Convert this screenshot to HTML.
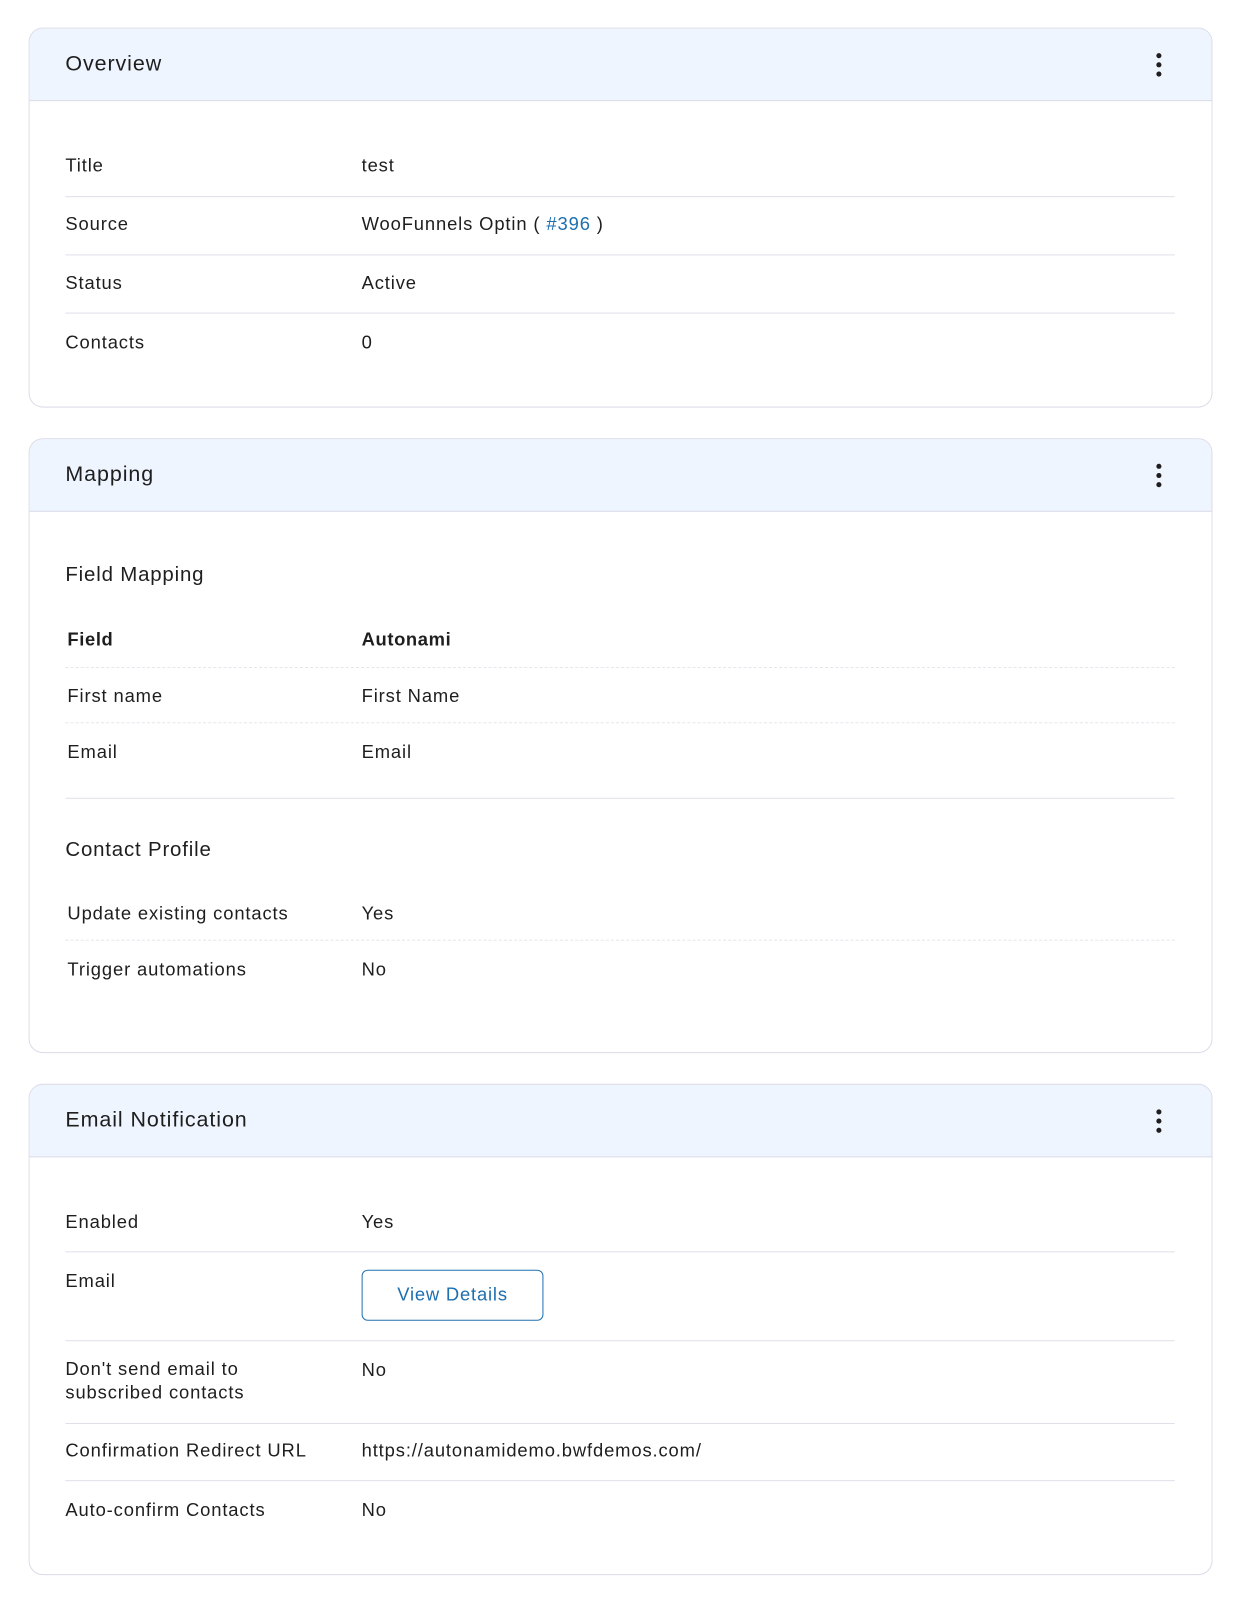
<!DOCTYPE html>
<html><head><meta charset="utf-8"><style>
html,body{margin:0;padding:0;background:#fff;}
body{width:1238px;height:1600px;overflow:hidden;position:relative;font-family:"Liberation Sans",Arial,sans-serif;color:#1e1e1e;}
#w{position:absolute;left:0;top:0;width:1212px;height:1567px;transform:scale(1.0215);transform-origin:0 0;}
.card{position:absolute;left:28px;width:1159px;border:1px solid #dcdce8;border-radius:14px;background:#fff;overflow:hidden;box-sizing:border-box;}
.hd{position:absolute;left:0;top:0;right:0;height:70px;background:#eef5ff;border-bottom:1px solid #dcdce8;}
.hd span{position:absolute;left:35px;top:22px;font-size:21px;line-height:26px;letter-spacing:0.9px;}
.dots{position:absolute;left:1103px;top:24px;width:5px;}
.dots i{display:block;width:5px;height:5px;border-radius:50%;background:#1e1e1e;margin-bottom:4px;}
.t{position:absolute;font-size:18px;line-height:24px;white-space:nowrap;letter-spacing:0.85px;}
.b{font-weight:bold;letter-spacing:0.6px;}
.ln{position:absolute;left:64px;width:1086px;height:0;border-top:1px solid #e0e0ea;}
.dl{position:absolute;left:64px;width:1086px;height:0;border-top:1px dashed #e6e6ee;}
a{color:#1c6fb0;text-decoration:none;}
.btn{position:absolute;left:354px;top:1243px;width:178px;height:50px;box-sizing:border-box;border:1.5px solid #2271b1;border-radius:6px;color:#1c6fb0;font-size:18px;line-height:47px;text-align:center;letter-spacing:0.8px;}
.h2{position:absolute;font-size:20px;line-height:24px;letter-spacing:0.8px;}
</style></head><body><div id="w">

<div class="card" style="top:27px;height:372px;"><div class="hd"><span>Overview</span><div class="dots"><i></i><i></i><i></i></div></div></div>
<div class="t" style="left:64px;top:150px;">Title</div><div class="t" style="left:354px;top:150px;">test</div>
<div class="ln" style="top:192px;"></div>
<div class="t" style="left:64px;top:207px;">Source</div><div class="t" style="left:354px;top:207px;">WooFunnels Optin ( <a>#396</a> )</div>
<div class="ln" style="top:249px;"></div>
<div class="t" style="left:64px;top:265px;">Status</div><div class="t" style="left:354px;top:265px;">Active</div>
<div class="ln" style="top:306px;"></div>
<div class="t" style="left:64px;top:323px;">Contacts</div><div class="t" style="left:354px;top:323px;">0</div>

<div class="card" style="top:429px;height:602px;"><div class="hd"><span>Mapping</span><div class="dots"><i></i><i></i><i></i></div></div></div>
<div class="h2" style="left:64px;top:551px;">Field Mapping</div>
<div class="t b" style="left:66px;top:614px;">Field</div><div class="t b" style="left:354px;top:614px;">Autonami</div>
<div class="dl" style="top:653px;"></div>
<div class="t" style="left:66px;top:669px;">First name</div><div class="t" style="left:354px;top:669px;">First Name</div>
<div class="dl" style="top:707px;"></div>
<div class="t" style="left:66px;top:724px;">Email</div><div class="t" style="left:354px;top:724px;">Email</div>
<div class="ln" style="top:781px;"></div>
<div class="h2" style="left:64px;top:820px;">Contact Profile</div>
<div class="t" style="left:66px;top:882px;">Update existing contacts</div><div class="t" style="left:354px;top:882px;">Yes</div>
<div class="dl" style="top:920px;"></div>
<div class="t" style="left:66px;top:937px;">Trigger automations</div><div class="t" style="left:354px;top:937px;">No</div>

<div class="card" style="top:1061px;height:481px;"><div class="hd"><span>Email Notification</span><div class="dots"><i></i><i></i><i></i></div></div></div>
<div class="t" style="left:64px;top:1184px;">Enabled</div><div class="t" style="left:354px;top:1184px;">Yes</div>
<div class="ln" style="top:1225px;"></div>
<div class="t" style="left:64px;top:1242px;">Email</div>
<div class="btn">View Details</div>
<div class="ln" style="top:1312px;"></div>
<div class="t" style="left:64px;top:1329px;line-height:23px;">Don't send email to<br>subscribed contacts</div><div class="t" style="left:354px;top:1329px;">No</div>
<div class="ln" style="top:1393px;"></div>
<div class="t" style="left:64px;top:1408px;">Confirmation Redirect URL</div><div class="t" style="left:354px;top:1408px;">https://autonamidemo.bwfdemos.com/</div>
<div class="ln" style="top:1449px;"></div>
<div class="t" style="left:64px;top:1466px;">Auto-confirm Contacts</div><div class="t" style="left:354px;top:1466px;">No</div>

</div></body></html>
